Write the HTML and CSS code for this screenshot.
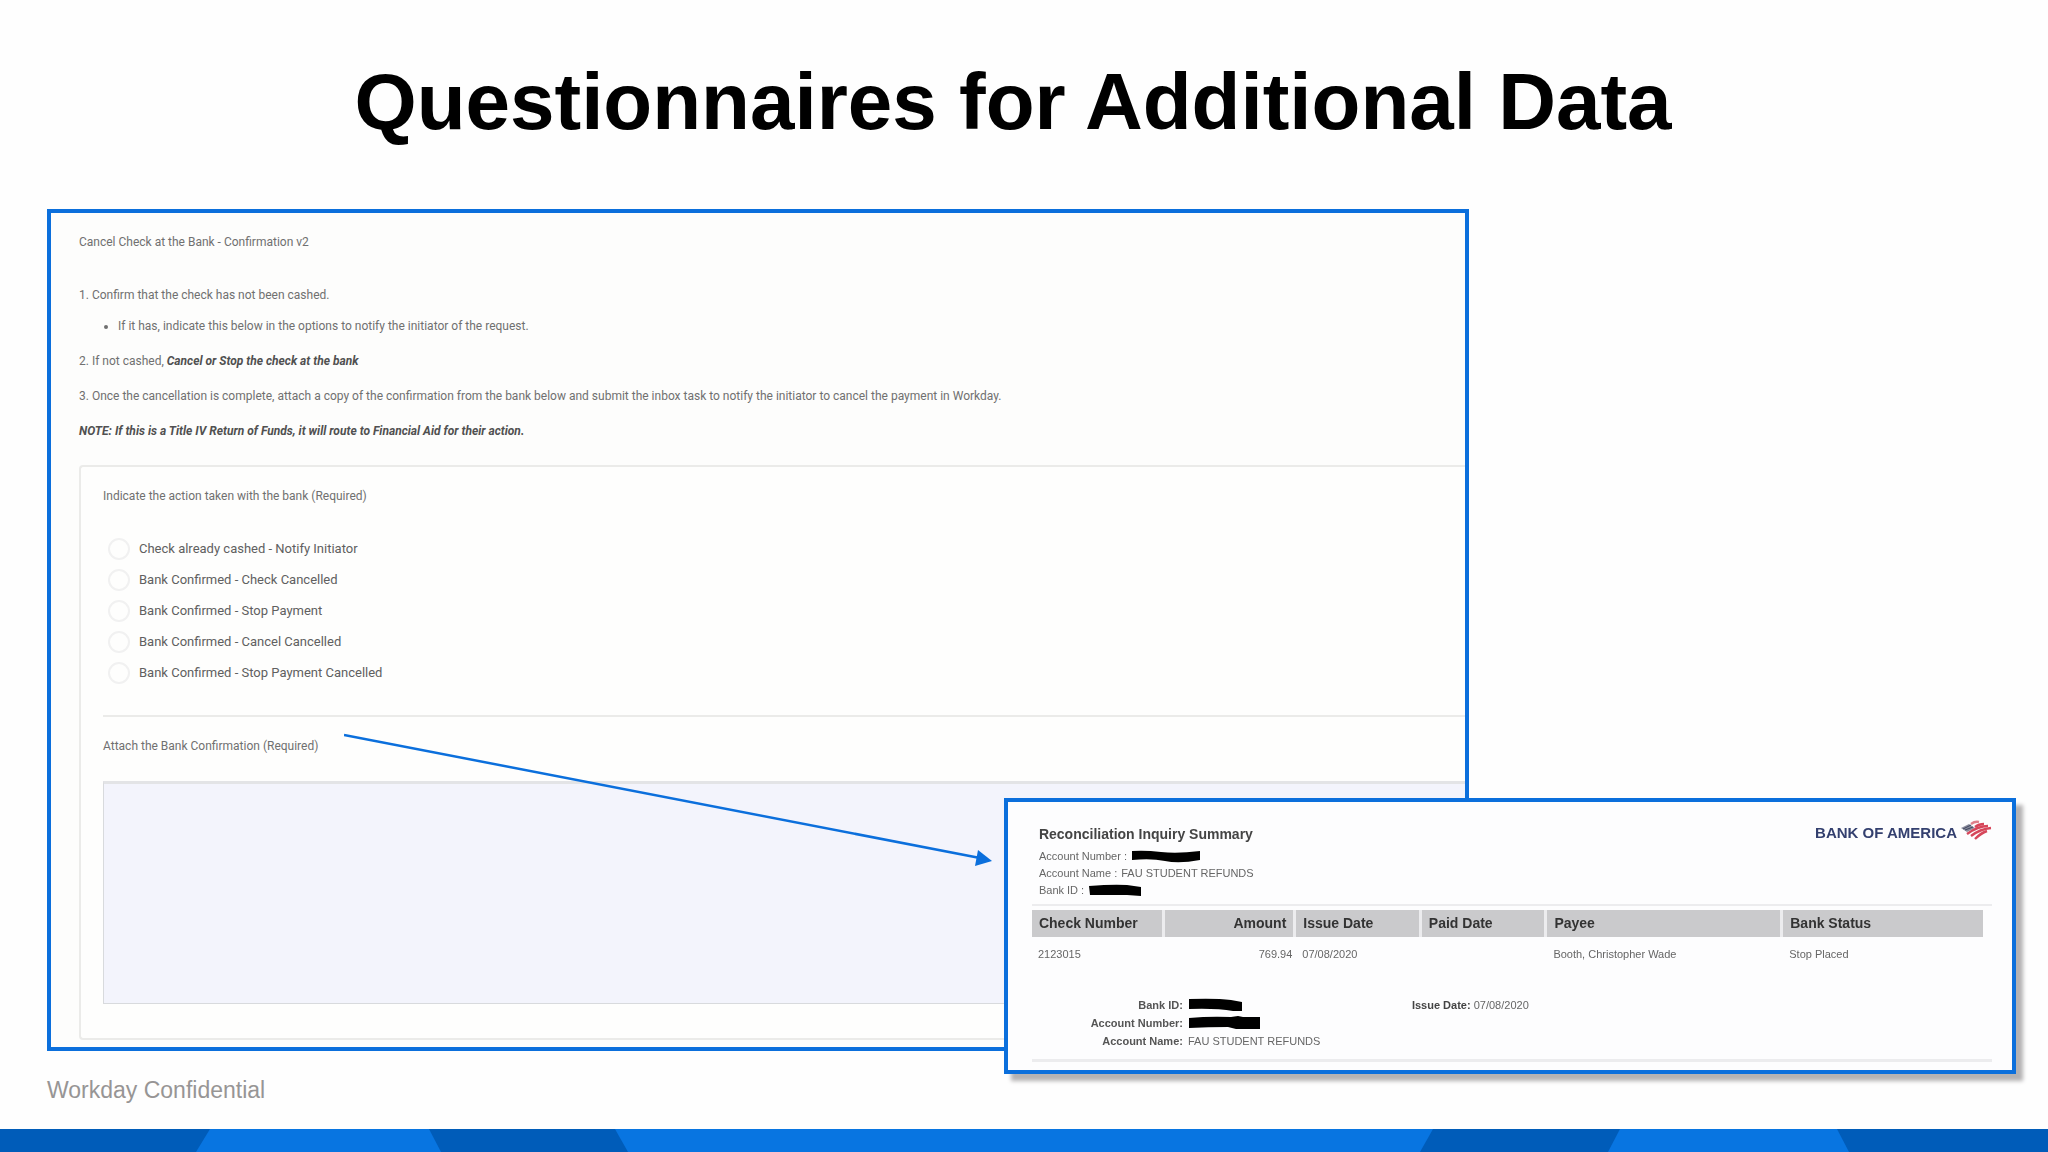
FILE: index.html
```
<!DOCTYPE html>
<html lang="en">
<head>
    <meta charset="utf-8">
    <title>Questionnaires for Additional Data</title>
    <link rel="stylesheet" href="styles.css">
</head>
<body>
    <h1 class="slide-title">Questionnaires for Additional Data</h1>

    <main class="stage">
        <form class="questionnaire">
            <h2 class="form-title">Cancel Check at the Bank - Confirmation v2</h2>
            <div class="instructions">
                <p class="first-step">1. Confirm that the check has not been cashed.</p>
                <ul>
                    <li>If it has, indicate this below in the options to notify the initiator of the request.</li>
                </ul>
                <p>2. If not cashed, <strong>Cancel or Stop the check at the bank</strong></p>
                <p>3. Once the cancellation is complete, attach a copy of the confirmation from the bank below and submit the inbox task to notify the initiator to cancel the payment in Workday.</p>
                <p><strong>NOTE: If this is a Title IV Return of Funds, it will route to Financial Aid for their action.</strong></p>
            </div>

            <div class="questions">
                <fieldset>
                    <legend>Indicate the action taken with the bank (Required)</legend>
                    <label><input type="radio" name="action">Check already cashed - Notify Initiator</label>
                    <label><input type="radio" name="action">Bank Confirmed - Check Cancelled</label>
                    <label><input type="radio" name="action">Bank Confirmed - Stop Payment</label>
                    <label><input type="radio" name="action">Bank Confirmed - Cancel Cancelled</label>
                    <label><input type="radio" name="action">Bank Confirmed - Stop Payment Cancelled</label>
                </fieldset>
                <div class="attachment">
                    <label for="confirmation">Attach the Bank Confirmation (Required)</label>
                    <div class="drop-zone">
                        <input type="file" id="confirmation">
                    </div>
                </div>
            </div>
        </form>

        <svg class="arrow" viewBox="0 0 650 136" aria-hidden="true">
            <path d="M0 4 L636 127" stroke="#0b6fdc" stroke-width="2.6"/>
            <path d="M634 119 L648 130 L631 135 Z" fill="#0b6fdc"/>
        </svg>

        <section class="bank-card">
            <div class="bank-head">
                <div>
                    <h2>Reconciliation Inquiry Summary</h2>
                    <p>Account Number :
                        <svg class="redacted" width="70" height="13" viewBox="0 0 70 13"><path d="M1 1 Q14 0 30 2 T69 1 L69 10 Q48 14 34 11 T1 10 Z"/></svg>
                    </p>
                    <p>Account Name : <span>FAU STUDENT REFUNDS</span></p>
                    <p>Bank ID :
                        <svg class="redacted" width="54" height="13" viewBox="0 0 54 13"><path d="M1 2 Q25 0 39 1 L53 3 L53 12 L39 11 H2 Z"/></svg>
                    </p>
                </div>
                <div class="bank-logo">
                    <span>BANK OF AMERICA</span>
                    <svg width="32" height="20" viewBox="0 0 32 20" aria-hidden="true">
                        <path d="M1 8 L9 4 L15 8 L7 12 Z" fill="#8a8c9c"/>
                        <path d="M3 9 L11 5 M5 10 L13 7" stroke="#3f4660" stroke-width="1"/>
                        <g fill="none" stroke="#d6465a" stroke-width="2.4">
                            <path d="M11 4 Q15 1 19 2" stroke="#de7f8a"/>
                            <path d="M15 7 Q19 4 24 4"/>
                            <path d="M7 14 Q18 6 28 6"/>
                            <path d="M11 16 Q20 9 31 8"/>
                            <path d="M15 19 Q21 13 27 11"/>
                        </g>
                    </svg>
                </div>
            </div>

            <table>
                <thead>
                    <tr>
                        <th class="col-check">Check Number</th>
                        <th class="col-amount">Amount</th>
                        <th class="col-issue">Issue Date</th>
                        <th class="col-paid">Paid Date</th>
                        <th class="col-payee">Payee</th>
                        <th class="col-status">Bank Status</th>
                    </tr>
                </thead>
                <tbody>
                    <tr>
                        <td>2123015</td>
                        <td class="col-amount">769.94</td>
                        <td>07/08/2020</td>
                        <td></td>
                        <td>Booth, Christopher Wade</td>
                        <td>Stop Placed</td>
                    </tr>
                </tbody>
            </table>

            <div class="bank-details">
                <dl>
                    <dt>Bank ID:</dt>
                    <dd><svg class="redacted" width="56" height="14" viewBox="0 0 56 14"><path d="M1 1 Q28 0 43 2 L54 4 L54 13 L45 13 Q28 10 1 11 Z"/></svg></dd>
                    <dt>Account Number:</dt>
                    <dd><svg class="redacted" width="74" height="14" viewBox="0 0 74 14"><path d="M1 2 Q22 0 43 1 L50 0 L55 1 H72 V13 H48 L40 11 Q20 11 1 12 Z"/></svg></dd>
                    <dt>Account Name:</dt>
                    <dd>FAU STUDENT REFUNDS</dd>
                </dl>
                <p><b>Issue Date:</b> 07/08/2020</p>
            </div>
        </section>
    </main>

    <footer>
        <p>Workday Confidential</p>
        <svg class="footer-band" viewBox="0 0 2048 23" preserveAspectRatio="none" aria-hidden="true">
            <rect width="2048" height="23" fill="#005cb9"/>
            <g fill="#0875e1">
                <path d="M210 0 H429 L441 23 H196 Z"/>
                <path d="M615 0 H1433 L1420 23 H628 Z"/>
                <path d="M1620 0 H1837 L1849 23 H1608 Z"/>
            </g>
        </svg>
    </footer>
</body>
</html>
```
FILE: styles.css
```
* {
    box-sizing: border-box;
}
body {
    margin: 0;
    min-height: 100vh;
    display: flex;
    flex-direction: column;
    background: #fefefe;
    font-family: "Liberation Sans", Arial, sans-serif;
}
h1, h2, p, ul, dl, dd {
    margin: 0;
}
.slide-title {
    padding: 56px 22px 61px 0;
    font-size: 80px;
    line-height: 92px;
    text-align: center;
    color: #000;
}
.stage {
    position: relative;
    margin: 0 32px 0 47px;
}

/* questionnaire */
.questionnaire {
    width: 72.2%;
    padding: 19px 0 7px;
    border: 4px solid #0b6fdc;
    background: #fdfdfc;
    font-family: Roboto, sans-serif;
    font-size: 12px;
    line-height: 20px;
    color: #707070;
    overflow: hidden;
}
.form-title {
    margin-left: 28px;
    font-size: 12px;
    font-weight: normal;
}
.instructions {
    padding-left: 28px;
}
.instructions p {
    margin-top: 15px;
}
.instructions .first-step {
    margin-top: 33px;
}
.instructions ul {
    margin-top: 11px;
    padding-left: 39px;
}
.instructions strong {
    font-style: italic;
    color: #505050;
}
.questions {
    margin: 24px 0 0 28px;
    padding: 19px 0 34px 22px;
    border: 2px solid #ebebe9;
    border-right: 0;
    border-radius: 4px 0 0 4px;
    background: #fefefd;
}
fieldset {
    margin: 0;
    padding: 0 0 27px;
    border: 0;
    border-bottom: 2px solid #ebebe9;
}
legend {
    padding: 0;
    margin-bottom: 27px;
}
fieldset label {
    display: flex;
    align-items: center;
    gap: 9px;
    height: 31px;
    padding-left: 5px;
    font-size: 13px;
    color: #606060;
}
input[type="radio"] {
    appearance: none;
    width: 22px;
    height: 22px;
    margin: 0;
    border: 2px solid #f1f1f1;
    border-radius: 50%;
}
.attachment {
    padding-top: 19px;
}
.drop-zone {
    height: 223px;
    margin-top: 25px;
    border: 1px solid #d8dadd;
    border-top: 3px solid #e3e4e6;
    border-right: 0;
    background: #f3f4fc;
}
.drop-zone input {
    width: 100%;
    height: 100%;
    opacity: 0;
}

.arrow {
    position: absolute;
    left: 297px;
    top: 522px;
    width: 650px;
}

/* bank summary, laid over the questionnaire */
.bank-card {
    position: absolute;
    right: 0;
    bottom: -23px;
    width: 51.4%;
    padding: 22px 20px 8px 24px;
    border: 4px solid #0b6fdc;
    background: #fdfdfe;
    box-shadow: 7px 7px 4px #b4b2b3;
    font-size: 11px;
    line-height: 17px;
    color: #666;
}
.bank-head {
    display: flex;
    justify-content: space-between;
    padding: 0 0 5px 7px;
    border-bottom: 2px solid #ececee;
}
.bank-head h2 {
    margin-bottom: 4px;
    font-size: 14px;
    line-height: 20px;
    color: #444;
}
.bank-head p {
    display: flex;
    align-items: center;
    gap: 4px;
    height: 17px;
}
.redacted {
    display: block;
    fill: #000;
}
.bank-logo {
    display: flex;
    gap: 3px;
    font-size: 15px;
    font-weight: bold;
    line-height: 18px;
    color: #34406f;
}
.bank-logo svg {
    margin-top: -4px;
}
table {
    width: calc(100% - 9px);
    margin-top: 4px;
    border-spacing: 0;
    table-layout: fixed;
    text-align: left;
}
th {
    height: 27px;
    padding: 0 7px;
    border-right: 3px solid #ececee;
    background: #cacacc;
    font-size: 14px;
    color: #333;
}
th:last-child {
    border-right: 0;
}
td {
    height: 34px;
    padding: 0 6px;
}
.col-check {
    width: 14%;
}
.col-amount {
    width: 13.8%;
    text-align: right;
}
td.col-amount {
    padding-right: 4px;
}
.col-issue {
    width: 13.2%;
}
.col-paid {
    width: 13.2%;
}
.col-payee {
    width: 24.8%;
}
.bank-details {
    display: flex;
    margin-top: 25px;
    padding-bottom: 9px;
    border-bottom: 3px solid #ececee;
    line-height: 18px;
}
.bank-details dl {
    display: grid;
    grid-template-columns: 151px 224px;
    column-gap: 5px;
    align-items: center;
}
.bank-details dt {
    font-weight: bold;
    text-align: right;
    color: #555;
}
.bank-details b {
    color: #444;
}

footer {
    display: flex;
    flex-direction: column;
    flex-grow: 1;
    justify-content: space-between;
}
footer p {
    padding: 26px 47px 0;
    font-size: 23px;
    line-height: 26px;
    color: #979595;
}
.footer-band {
    display: block;
    width: 100%;
    height: 23px;
}
```
